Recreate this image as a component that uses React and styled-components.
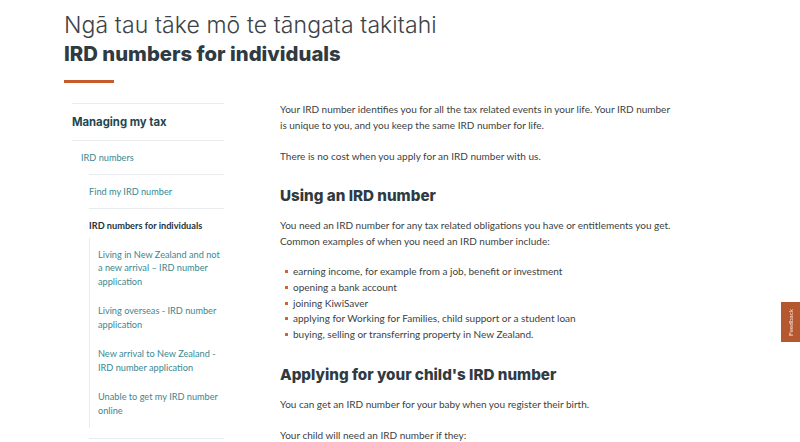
import styled, { createGlobalStyle } from "styled-components";

const GlobalStyle = createGlobalStyle`
  html, body {
    margin: 0;
    padding: 0;
    background: #fff;
  }
  body {
    font-family: "Lato", "Liberation Sans", sans-serif;
    color: #3b3f42;
  }
`;

const subLinks = [
  "Living in New Zealand and not a new arrival – IRD number application",
  "Living overseas - IRD number application",
  "New arrival to New Zealand - IRD number application",
  "Unable to get my IRD number online",
];

const bullets = [
  "earning income, for example from a job, benefit or investment",
  "opening a bank account",
  "joining KiwiSaver",
  "applying for Working for Families, child support or a student loan",
  "buying, selling or transferring property in New Zealand.",
];

export default function App() {
  return (
    <>
      <GlobalStyle />
      <Page>
        <Header>
          <MaoriTitle>Ngā tau tāke mō te tāngata takitahi</MaoriTitle>
          <Title>IRD numbers for individuals</Title>
          <Underline />
        </Header>
        <Body>
          <Sidebar>
            <NavItem $level={0}>
              <NavHeading>Managing my tax</NavHeading>
            </NavItem>
            <NavItem $level={1}>
              <NavLink>IRD numbers</NavLink>
            </NavItem>
            <NavItem $level={2}>
              <NavLink>Find my IRD number</NavLink>
            </NavItem>
            <NavItem $level={2}>
              <NavCurrent>IRD numbers for individuals</NavCurrent>
              <SubList>
                {subLinks.map((s) => (
                  <SubItem key={s}>
                    <NavLink>{s}</NavLink>
                  </SubItem>
                ))}
              </SubList>
            </NavItem>
            <NavEnd />
          </Sidebar>
          <Main>
            <Para>
              Your IRD number identifies you for all the tax related events in
              your life. Your IRD number is unique to you, and you keep the same
              IRD number for life.
            </Para>
            <Para>There is no cost when you apply for an IRD number with us.</Para>
            <Heading>Using an IRD number</Heading>
            <Para>
              You need an IRD number for any tax related obligations you have or
              entitlements you get. Common examples of when you need an IRD
              number include:
            </Para>
            <Bullets>
              {bullets.map((b) => (
                <li key={b}>{b}</li>
              ))}
            </Bullets>
            <Heading>Applying for your child's IRD number</Heading>
            <Para>
              You can get an IRD number for your baby when you register their
              birth.
            </Para>
            <Para>Your child will need an IRD number if they:</Para>
          </Main>
        </Body>
        <FeedbackTab>Feedback</FeedbackTab>
      </Page>
    </>
  );
}

const Page = styled.div`
  height: 442px;
  overflow: hidden;
  padding-left: 64px;
  box-sizing: border-box;
`;

const Header = styled.header`
  padding-top: 10px;
`;

const MaoriTitle = styled.h1`
  margin: 0;
  font-family: "Inter", "Liberation Sans", sans-serif;
  font-weight: 300;
  font-size: 23px;
  line-height: 30px;
  color: #3d4348;
  letter-spacing: 0.1px;
`;

const Title = styled.h2`
  margin: 1px 0 0;
  font-family: "Inter", "Liberation Sans", sans-serif;
  font-weight: 800;
  font-size: 20.3px;
  line-height: 26px;
  color: #2f3a42;
`;

const Underline = styled.div`
  width: 50px;
  height: 3px;
  background: #c45c2e;
  margin-top: 13px;
`;

const Body = styled.div`
  display: flex;
  margin-top: 20px;
`;

const Sidebar = styled.nav`
  width: 152px;
  margin-left: 8px;
  flex-shrink: 0;
`;

const NavItem = styled.div`
  margin-left: ${(p) => (p.$level === 2 ? 17 : 0)}px;
  padding-left: ${(p) => (p.$level === 1 ? 9 : 0)}px;
  border-top: 1px solid #e8ecee;
  padding-top: ${(p) => (p.$level === 0 ? 9 : 10)}px;
  padding-bottom: ${(p) => (p.$level === 0 ? 9 : 9.5)}px;
`;

const NavHeading = styled.div`
  font-family: "Inter", "Liberation Sans", sans-serif;
  font-weight: 700;
  font-size: 11.3px;
  line-height: 18px;
  color: #1f4750;
`;

const NavLink = styled.div`
  font-size: 9.2px;
  line-height: 13.5px;
  color: #3a8893;
`;

const NavCurrent = styled.div`
  font-size: 9.2px;
  line-height: 13.5px;
  font-weight: 700;
  color: #23343c;
`;

const SubList = styled.div`
  margin-top: 5px;
  border-left: 1px solid #e8ecee;
  padding: 2px 0 3px 8px;
`;

const SubItem = styled.div`
  padding: 8px 0;
`;

const NavEnd = styled.div`
  margin-left: 17px;
  border-top: 1px solid #e8ecee;
`;

const Main = styled.main`
  margin-left: 56px;
  width: 392px;
  margin-top: -2px;
`;

const Para = styled.p`
  margin: 0 0 15px;
  font-size: 10px;
  line-height: 16px;
  color: #3b3f42;
`;

const Heading = styled.h3`
  margin: 21px 0 10px;
  font-family: "Inter", "Liberation Sans", sans-serif;
  font-weight: 800;
  font-size: 15.2px;
  line-height: 22px;
  color: #2f3a42;
`;

const Bullets = styled.ul`
  margin: 0 0 15px;
  padding-left: 13px;
  list-style: none;
  li {
    position: relative;
    font-size: 10px;
    line-height: 15.75px;
    color: #3b3f42;
  }
  li::before {
    content: "";
    position: absolute;
    left: -8px;
    top: 6px;
    width: 3px;
    height: 3px;
    background: #d0652f;
  }
`;

const FeedbackTab = styled.div`
  position: fixed;
  right: 0;
  top: 302px;
  width: 19px;
  height: 40px;
  background: #b5582f;
  color: #f6e6de;
  font-family: "Lato", "Liberation Sans", sans-serif;
  font-size: 6.5px;
  writing-mode: vertical-rl;
  transform: rotate(180deg);
  display: flex;
  align-items: center;
  justify-content: center;
`;
